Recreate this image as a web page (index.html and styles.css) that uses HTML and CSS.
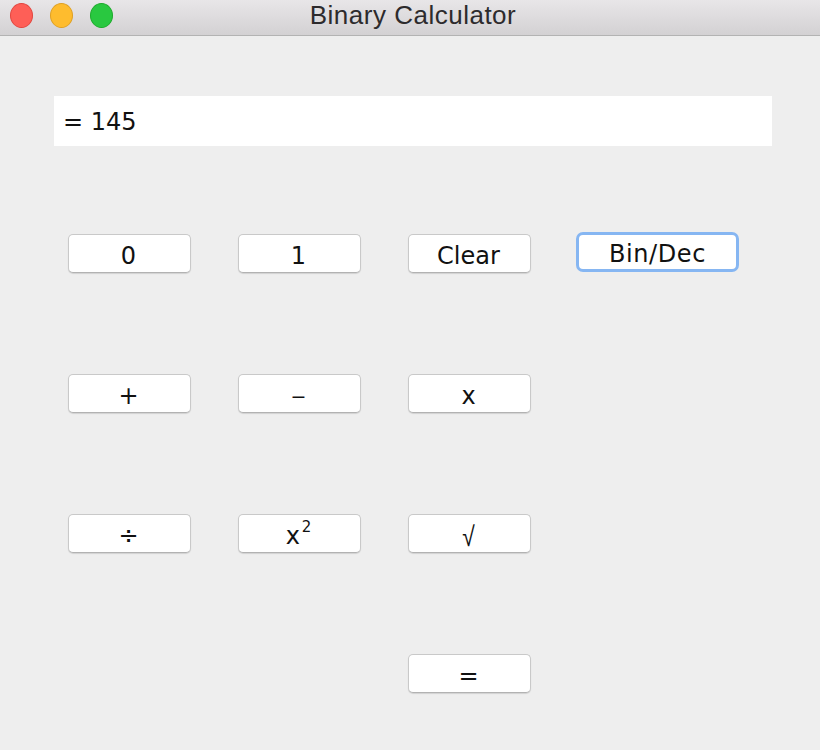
FILE: index.html
```html
<!DOCTYPE html>
<html lang="en">
<head>
<meta charset="utf-8">
<title>Binary Calculator</title>
<link rel="stylesheet" href="styles.css">
</head>
<body>
<div class="window">
  <header class="titlebar">
    <div class="lights">
      <span class="light red"></span>
      <span class="light yellow"></span>
      <span class="light green"></span>
    </div>
    <div class="title">Binary Calculator</div>
    <div></div>
  </header>
  <main class="content">
    <div class="display">= 145</div>
    <div class="keypad">
      <button class="key">0</button>
      <button class="key">1</button>
      <button class="key">Clear</button>
      <button class="key focused">Bin/Dec</button>
      <button class="key">+</button>
      <button class="key minus">−</button>
      <button class="key">x</button>
      <span></span>
      <button class="key">÷</button>
      <button class="key">x<sup>2</sup></button>
      <button class="key root"><span class="radical">√</span></button>
      <span></span>
      <button class="key eq">=</button>
    </div>
  </main>
</div>
</body>
</html>
```
FILE: styles.css
```css
html, body {
  margin: 0;
  padding: 0;
}
body {
  background: #eeeeee;
  width: 820px;
  height: 750px;
  overflow: hidden;
  font-family: "DejaVu Sans", "Liberation Sans", sans-serif;
}
.titlebar {
  height: 35px;
  border-bottom: 1px solid #b3b3b3;
  background: linear-gradient(#e8e6e8, #d3d1d3);
  display: grid;
  grid-template-columns: 1fr auto 1fr;
  align-items: center;
}
.lights {
  display: flex;
  gap: 17px;
  padding-left: 10px;
  align-items: center;
  margin-top: -5px;
}
.light {
  width: 21px;
  height: 23px;
  border-radius: 50%;
  border: 1px solid;
  box-sizing: content-box;
  display: block;
}
.red { background: #fe5f57; border-color: #e2463f; }
.yellow { background: #febc2e; border-color: #dfa023; }
.green { background: #29c840; border-color: #1dab2b; }
.title {
  font-family: "Liberation Sans", Arial, sans-serif;
  font-size: 26px;
  color: #2d2b2d;
  letter-spacing: 0.5px;
  padding-left: 6px;
  margin-top: -5px;
}
.content {
  padding: 60px 48px 0 54px;
}
.display {
  height: 50px;
  background: #ffffff;
  font-size: 24px;
  line-height: 52px;
  padding-left: 9px;
  color: #111;
}
.keypad {
  margin-top: 88px;
  margin-left: 14px;
  display: grid;
  grid-template-columns: repeat(4, 123px);
  grid-auto-rows: 39px;
  column-gap: 47px;
  row-gap: 101px;
}
.key {
  font-family: "DejaVu Sans", sans-serif;
  font-size: 24px;
  color: #111;
  background: #ffffff;
  border: 1px solid #c9c9c9;
  border-bottom-color: #b2b2b2;
  border-radius: 5px;
  box-shadow: 0 1px 1px rgba(0,0,0,0.12);
  padding: 4px 2px 0 0;
  margin: 0;
  width: 123px;
  height: 39px;
  line-height: 35px;
  text-align: center;
}
.key sup {
  font-size: 15px;
  vertical-align: 0;
  position: relative;
  top: -12px;
  margin-left: 2px;
}
.key.minus {
  font-size: 19px;
  padding-bottom: 3px;
}
.radical {
  display: inline-block;
  font-weight: 300;
  transform: scale(0.95, 1.15);
  position: relative;
  top: 1px;
}
.focused {
  width: 163px;
  height: 40px;
  margin: -2px 0 0 -2px;
  border: 3px solid #86b6f2;
  border-radius: 7px;
  line-height: 34px;
  padding: 2px 0 0 0;
  box-shadow: none;
  letter-spacing: 0.6px;
}
.eq {
  grid-column: 3;
}
```
